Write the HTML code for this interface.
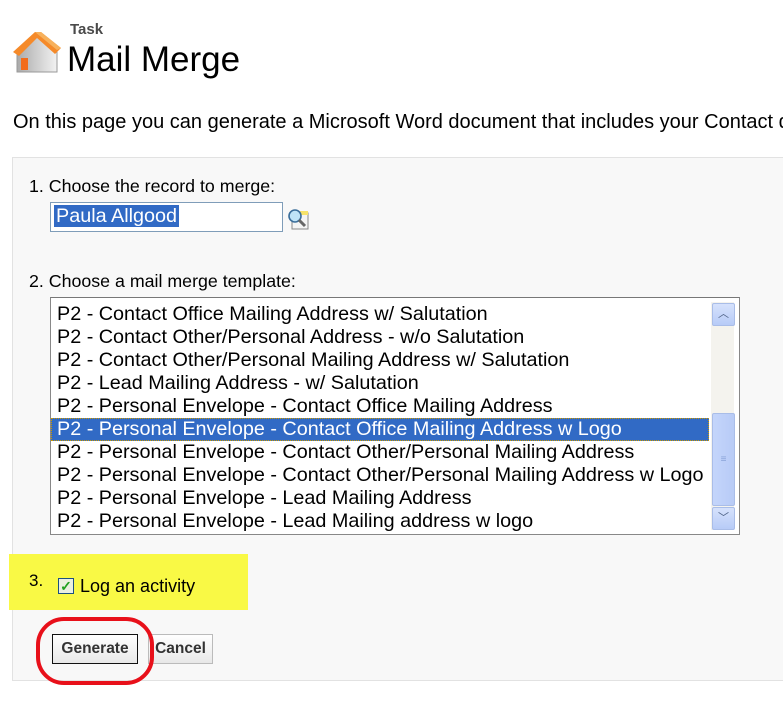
<!DOCTYPE html>
<html><head><style>
body{margin:0;width:783px;height:703px;overflow:hidden;background:#fff;font-family:"Liberation Sans",Arial,sans-serif;color:#000;position:relative}
.a{position:absolute;white-space:nowrap}
.list div{height:23px;line-height:23px;padding-left:6px;font-size:19.8px}
</style></head><body>
<svg class="a" style="left:11px;top:28px" width="52" height="50" viewBox="0 0 52 50">
<defs><linearGradient id="g" x1="0" x2="1"><stop offset="0" stop-color="#aaa"/><stop offset="1" stop-color="#f2f2f2"/></linearGradient></defs>
<path d="M6 24 L26 8 L46 24 L46 44 L6 44Z" fill="url(#g)" stroke="#999"/>
<path d="M2 24 L24 4 L30 4 L50 20 L44 26 L26 10 L8 28Z" fill="#f58a2a"/>
<path d="M24 4 L30 4 L50 20 L46 22Z" fill="#f7b15c"/>
<rect x="10" y="30" width="7" height="12" fill="#f26c1b"/>
</svg>
<div class="a" style="left:70px;top:21px;font-size:15px;font-weight:bold;color:#4a4a4a">Task</div>
<div class="a" style="left:67px;top:40px;font-size:35px">Mail Merge</div>
<div class="a" style="left:13px;top:111px;font-size:20px">On this page you can generate a Microsoft Word document that includes your Contact data</div>
<div class="a" style="left:12px;top:157px;width:790px;height:522px;background:#f8f8f8;border:1px solid #e2e2e2"></div>
<div class="a" style="left:29px;top:176px;font-size:17.8px">1. Choose the record to merge:</div>
<div class="a" style="left:50px;top:202px;width:231px;height:28px;border:1px solid #7f9db9;background:#fff"></div>
<div class="a" style="left:54px;top:205px;height:22px;line-height:22px;font-size:19.8px;background:#316ac5;color:#fff;padding:0 2px">Paula Allgood</div>
<svg class="a" style="left:286px;top:207px" width="24" height="24" viewBox="0 0 24 24"><rect x="6" y="6" width="16" height="16" fill="#f4f4f4" stroke="#888"/><rect x="14" y="4" width="8" height="4" fill="#f7e36a"/><circle cx="9" cy="9" r="6" fill="#bfe3f7" stroke="#3a6d9a" stroke-width="1.6"/><path d="M13 13 L19 19" stroke="#666" stroke-width="3"/></svg>
<div class="a" style="left:29px;top:271px;font-size:17.8px">2. Choose a mail merge template:</div>
<div class="a list" style="left:50px;top:297px;width:690px;height:238px;border:1px solid #888;border-top-color:#777;background:#fff;padding-top:5px;box-sizing:border-box">
<div>P2 - Contact Office Mailing Address w/ Salutation</div>
<div>P2 - Contact Other/Personal Address - w/o Salutation</div>
<div>P2 - Contact Other/Personal Mailing Address w/ Salutation</div>
<div>P2 - Lead Mailing Address - w/ Salutation</div>
<div>P2 - Personal Envelope - Contact Office Mailing Address</div>
<div style="background:#316ac5;color:#fff;width:652px;outline:1px dotted #c90;outline-offset:-1px">P2 - Personal Envelope - Contact Office Mailing Address w Logo</div>
<div>P2 - Personal Envelope - Contact Other/Personal Mailing Address</div>
<div>P2 - Personal Envelope - Contact Other/Personal Mailing Address w Logo</div>
<div>P2 - Personal Envelope - Lead Mailing Address</div>
<div>P2 - Personal Envelope - Lead Mailing address w logo</div>
</div>
<div class="a" style="left:711px;top:302px;width:23px;height:228px;background:#f4f3ee"></div>
<div class="a" style="left:712px;top:303px;width:21px;height:21px;background:linear-gradient(#d6e2fc,#b7cbf7);border:1px solid #a9bde8;border-radius:2px;font-size:11px;text-align:center;line-height:21px;color:#4d6185">︿</div>
<div class="a" style="left:712px;top:413px;width:21px;height:91px;background:linear-gradient(90deg,#c4d5fb,#b8cbf6);border:1px solid #a9bde8;border-radius:2px;text-align:center;line-height:91px;font-size:10px;color:#8aa3d8">≡</div>
<div class="a" style="left:712px;top:507px;width:21px;height:21px;background:linear-gradient(#d6e2fc,#b7cbf7);border:1px solid #a9bde8;border-radius:2px;font-size:11px;text-align:center;line-height:21px;color:#4d6185">﹀</div>
<div class="a" style="left:9px;top:554px;width:239px;height:56px;background:#f9f945"></div>
<div class="a" style="left:29px;top:571px;font-size:17px">3.</div>
<div class="a" style="left:58px;top:578px;width:14px;height:14px;border:1px solid #1c5180;background:#eaf0e0;color:#21a121;font-size:14px;line-height:14px;text-align:center;font-weight:bold">✓</div>
<div class="a" style="left:80px;top:576px;font-size:18px">Log an activity</div>
<div class="a" style="left:52px;top:634px;width:84px;height:28px;border:1px solid #111;background:linear-gradient(#fff,#e8e8e8);font-weight:bold;font-size:15.5px;line-height:28px;text-align:center;color:#333">Generate</div>
<div class="a" style="left:148px;top:634px;width:63px;height:28px;border:1px solid #bbb;background:linear-gradient(#fff,#e8e8e8);font-weight:bold;font-size:15.5px;line-height:28px;text-align:center;color:#333">Cancel</div>
<div class="a" style="left:36px;top:617px;width:110px;height:60px;border:4px solid #e8101a;border-radius:28px"></div>
</body></html>
